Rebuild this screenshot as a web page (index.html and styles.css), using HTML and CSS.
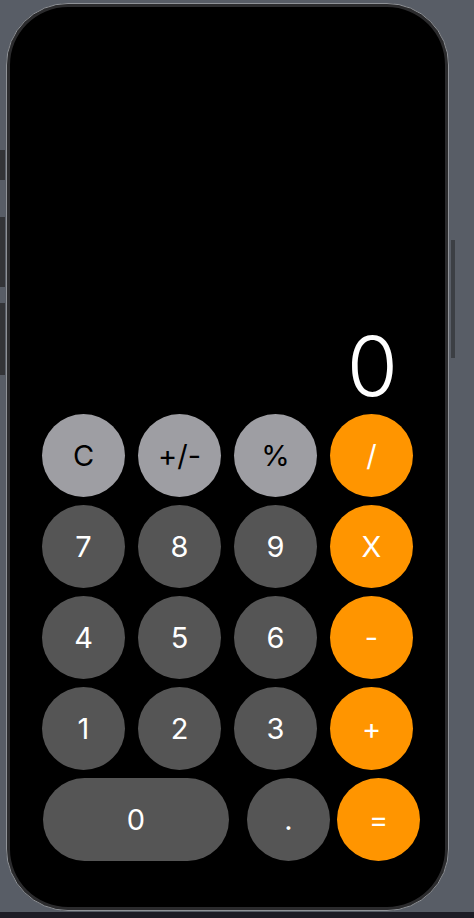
FILE: index.html
```html
<!DOCTYPE html>
<html lang="en">
<head>
  <meta charset="UTF-8">
  <title>Calculator</title>
  <link rel="stylesheet" href="styles.css">
</head>
<body>
  <div class="stage">
    <span class="side-btn action"></span>
    <span class="side-btn vol-up"></span>
    <span class="side-btn vol-down"></span>
    <span class="side-btn power"></span>

    <div class="device">
      <div class="screen">
        <div class="display">0</div>
        <div class="keypad">
          <button class="key fn">C</button>
          <button class="key fn">+/-</button>
          <button class="key fn">%</button>
          <button class="key op">/</button>

          <button class="key num">7</button>
          <button class="key num">8</button>
          <button class="key num">9</button>
          <button class="key op">X</button>

          <button class="key num">4</button>
          <button class="key num">5</button>
          <button class="key num">6</button>
          <button class="key op">-</button>

          <button class="key num">1</button>
          <button class="key num">2</button>
          <button class="key num">3</button>
          <button class="key op">+</button>

          <div class="bottom-row">
            <button class="key num zero">0</button>
            <button class="key num dot">.</button>
            <button class="key op equals">=</button>
          </div>
        </div>
      </div>
    </div>
  </div>
  <div class="taskbar"></div>
</body>
</html>
```

FILE: styles.css
```css
html, body { margin: 0; padding: 0; }
body { background: #585d66; font-family: "Inter", "Liberation Sans", sans-serif; height: 918px; overflow: hidden; }

.stage { position: relative; height: 911px; padding-top: 3px; box-sizing: border-box; }

/* phone body */
.device { width: 443px; height: 908px; margin-left: 6px; box-sizing: border-box; background: #000; border: 1px solid #8f9297; border-radius: 62px; box-shadow: inset 0 0 0 3px #2b2b2d; }

/* hardware buttons sticking out of the frame */
.side-btn { position: absolute; background: #333437; }
.action { left: 0; top: 150px; width: 5px; height: 30px; }
.vol-up { left: 0; top: 217px; width: 5px; height: 70px; }
.vol-down { left: 0; top: 303px; width: 5px; height: 72px; }
.power { left: 451px; top: 240px; width: 4px; height: 118px; background: #3c3f44; }

.screen { height: 100%; display: flex; flex-direction: column; justify-content: flex-end; align-items: center; padding-bottom: 49px; box-sizing: border-box; }

.display { width: 371px; box-sizing: border-box; padding-right: 15px; margin-bottom: 6px; text-align: right; color: #fff; font-size: 83px; font-weight: 300; line-height: 84px; }

.keypad { display: grid; grid-template-columns: repeat(4, 83px); grid-auto-rows: 83px; gap: 8px 13px; }

.key { flex-shrink: 0; width: 83px; height: 83px; border: none; border-radius: 50%; padding: 0; font-family: inherit; font-size: 29px; font-weight: 400; color: #fff; cursor: pointer; }
.fn { background: #9e9ea3; color: #000; }
.num { background: #555555; }
.op { background: #ff9500; }

.bottom-row { grid-column: 1 / -1; display: flex; }
.zero { width: 186px; border-radius: 42px; margin-left: 1px; }
.dot { margin-left: 18px; }
.equals { margin-left: 7px; }

.taskbar { height: 6px; margin-top: 1px; background: #1d1c25; }
```
